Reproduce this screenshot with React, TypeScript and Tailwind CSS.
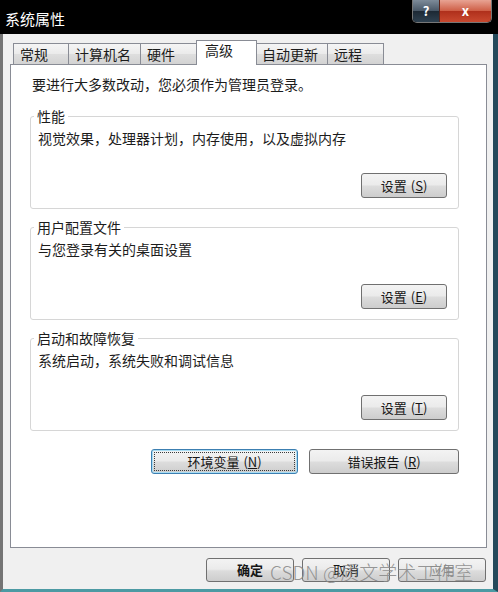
import React from 'react';

type BtnProps = {
  label: string;
  mnemonic?: string;
  className?: string;
  focused?: boolean;
  disabled?: boolean;
};

const WinButton = ({ label, mnemonic, className = '', focused = false, disabled = false }: BtnProps) => (
  <button
    type="button"
    className={`flex items-center justify-center rounded-[3px] border p-[2px] text-[13px] leading-4 bg-[linear-gradient(#f3f3f3,#ebebeb_46%,#dcdcdc_54%,#cdcdcd)] ${
      focused ? 'border-[#3c7fb1] shadow-[inset_0_0_0_1px_#a9ddf4]' : 'border-[#707070]'
    } ${disabled ? 'text-[#8e8e8e]' : 'text-[#161616]'} ${className}`}
  >
    <span
      className={`flex h-full w-full items-center justify-center ${
        focused ? 'border border-dotted border-[#3a3a3a]' : ''
      }`}
    >
      {label}
      {mnemonic && (
        <span className="ml-[4px]">
          (<u>{mnemonic}</u>)
        </span>
      )}
    </span>
  </button>
);

type GroupProps = { title: string; desc: string; mnemonic: string };

const Group = ({ title, desc, mnemonic }: GroupProps) => (
  <fieldset className="rounded-[3px] border border-[#d6d6d6]">
    <legend className="ml-[3px] px-[3px] text-[14px] leading-4">{title}</legend>
    <div className="pl-[7px] pr-[11px] pt-[6px] pb-[10px]">
      <p className="text-[14px] leading-4">{desc}</p>
      <div className="mt-[27px] flex justify-end">
        <WinButton label="设置" mnemonic={mnemonic} className="h-[25px] w-[86px]" />
      </div>
    </div>
  </fieldset>
);

const tabBase =
  'h-[21px] border border-b-0 border-[#898c95] pl-[6px] text-left text-[14px] leading-[20px] bg-[linear-gradient(#f5f5f5,#ebebeb_48%,#dedede_52%,#d3d3d3)]';

const App = () => {
  return (
    <div className="flex h-[592px] w-[498px] flex-col overflow-hidden bg-black font-['Noto_Sans_CJK_SC',sans-serif] text-[#1c1c1c]">
      {/* title bar */}
      <div className="flex h-[34px] shrink-0 items-start justify-between">
        <p className="pl-[5px] pt-[11px] text-[15px] leading-4 text-white">系统属性</p>
        <div className="mr-[6px] flex h-[23px] overflow-hidden rounded-b-[5px] border border-t-0 border-[#777]">
          <div className="flex w-[26px] items-center justify-center bg-[linear-gradient(#7d8b99,#4a5968_48%,#1d2935_52%,#2e4150)] text-[13px] font-bold text-white">
            ?
          </div>
          <div className="flex w-[52px] items-center justify-center border-l border-[#5a2218] bg-[linear-gradient(#e8a393,#cf6048_48%,#b0301c_52%,#c9492f)] text-[13px] font-bold text-white">
            x
          </div>
        </div>
      </div>

      {/* client area */}
      <div className="relative flex flex-1 flex-col border-b-[3px] border-l-[3px] border-r-[5px] border-b-[#4c9aa3] border-l-[#747474] border-r-[#24495a] bg-[#f0f0f0]">
        {/* tabs */}
        <div className="mt-[6px] flex h-[24px] items-end pl-[10px]">
          <div className={`${tabBase} w-[56px]`}>常规</div>
          <div className={`${tabBase} -ml-px w-[73px]`}>计算机名</div>
          <div className={`${tabBase} -ml-px w-[58px] pl-[4px]`}>硬件</div>
          <div className="relative z-10 -mx-[2px] -mb-px h-[25px] w-[61px] border border-b-0 border-[#898c95] bg-white pl-[8px] text-[14px] leading-[18px]">
            高级
          </div>
          <div className={`${tabBase} w-[73px]`}>自动更新</div>
          <div className={`${tabBase} -ml-px w-[57px] pl-[5px]`}>远程</div>
        </div>

        {/* tab panel */}
        <div className="ml-[7px] mr-[6px] flex h-[484px] flex-col border border-[#898c95] bg-white pl-[19px] pr-[27px] pt-[11px]">
          <p className="pl-[2px] text-[14px] leading-4">要进行大多数改动，您必须作为管理员登录。</p>
          <div className="mt-[16px] flex flex-col gap-[10px]">
            <Group title="性能" desc="视觉效果，处理器计划，内存使用，以及虚拟内存" mnemonic="S" />
            <Group title="用户配置文件" desc="与您登录有关的桌面设置" mnemonic="E" />
            <Group title="启动和故障恢复" desc="系统启动，系统失败和调试信息" mnemonic="T" />
          </div>
          <div className="mt-[18px] flex justify-end gap-[11px]">
            <WinButton label="环境变量" mnemonic="N" focused className="h-[25px] w-[147px]" />
            <WinButton label="错误报告" mnemonic="R" className="h-[25px] w-[150px]" />
          </div>
        </div>

        {/* dialog buttons */}
        <div className="mt-[10px] flex justify-end gap-[8px] pr-[7px]">
          <WinButton label="确定" className="h-[24px] w-[88px] font-bold" />
          <WinButton label="取消" className="h-[24px] w-[88px]" />
          <WinButton label="应用" disabled className="h-[24px] w-[88px]" />
        </div>

        {/* watermark */}
        <div className="pointer-events-none absolute bottom-[5px] left-[267px] whitespace-nowrap text-[19px] font-light leading-[24px] text-[#8a8a8a]/90">
          CSDN @质文学术工作室
        </div>
      </div>
    </div>
  );
};

export default App;
